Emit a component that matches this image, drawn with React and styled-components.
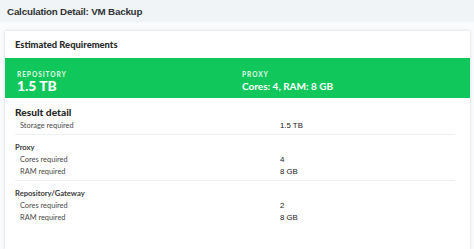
import React from "react";
import styled, { createGlobalStyle } from "styled-components";

const Global = createGlobalStyle`
  html, body { margin: 0; padding: 0; }
  body { background: #fafbfc; width: 474px; height: 249px; overflow: hidden; }
`;

const Page = styled.div`
  display: flex;
  flex-direction: column;
  height: 249px;
`;

const Header = styled.div`
  height: 22px;
  background: #f1f4f6;
  display: flex;
  align-items: center;
  padding-left: 7px;
  font-family: "Liberation Sans", Arial, sans-serif;
  font-weight: bold;
  font-size: 9.8px;
  letter-spacing: -0.2px;
  color: #2f3235;
`;

const Body = styled.div`
  padding: 9px 4px 0 5px;
  flex: 1;
  display: flex;
`;

const Card = styled.div`
  flex: 1;
  background: #fff;
  box-shadow: 0 0 3px rgba(0, 0, 0, 0.15);
  display: flex;
  flex-direction: column;
  font-family: "Lato", "Open Sans", sans-serif;
`;

const CardTitle = styled.div`
  height: 27px;
  display: flex;
  align-items: center;
  padding-left: 10px;
  font-weight: 900;
  font-size: 9.4px;
  color: #2a2a2a;
`;

const Banner = styled.div`
  height: 40px;
  box-sizing: border-box;
  padding: 5px 0 0 12px;
  background: #0fc75a;
  display: grid;
  grid-template-columns: 225px 1fr;
  align-items: center;
  color: #fff;
`;

const Stat = styled.div`
  display: flex;
  flex-direction: column;
`;

const StatLabel = styled.div`
  font-size: 6.6px;
  font-weight: 900;
  letter-spacing: 0.9px;
  color: rgba(255, 255, 255, 0.82);
  line-height: 10px;
`;

const StatValue = styled.div`
  font-size: ${(p) => (p.$big ? "13.8px" : "10px")};
  font-weight: ${(p) => (p.$big ? 900 : 700)};
  line-height: 14px;
`;

const Details = styled.div`
  padding: 7px 15px 0 10px;
`;

const DetailTitle = styled.div`
  font-size: 10.2px;
  font-weight: 900;
  color: #2a2a2a;
  line-height: 15px;
`;

const Section = styled.div`
  border-bottom: ${(p) => (p.$last ? "none" : "1px solid #eef0f2")};
  padding-bottom: 2px;
`;

const SectionTitle = styled.div`
  font-size: 7.6px;
  font-weight: 700;
  color: #3a3a3a;
  line-height: 14px;
  padding-top: 5px;
`;

const Row = styled.div`
  display: grid;
  grid-template-columns: 260px 1fr;
  padding-left: 5px;
  line-height: 12px;
`;

const Label = styled.span`
  font-size: 7.4px;
  color: #4a4a4a;
`;

const Value = styled.span`
  font-family: "Liberation Sans", Arial, sans-serif;
  font-size: 7.8px;
  color: #222;
`;

export default function App() {
  return (
    <Page>
      <Global />
      <Header>Calculation Detail: VM Backup</Header>
      <Body>
        <Card>
          <CardTitle>Estimated Requirements</CardTitle>
          <Banner>
            <Stat>
              <StatLabel>REPOSITORY</StatLabel>
              <StatValue $big>1.5 TB</StatValue>
            </Stat>
            <Stat>
              <StatLabel>PROXY</StatLabel>
              <StatValue>Cores: 4, RAM: 8 GB</StatValue>
            </Stat>
          </Banner>
          <Details>
            <DetailTitle>Result detail</DetailTitle>
            <Section>
              <Row>
                <Label>Storage required</Label>
                <Value>1.5 TB</Value>
              </Row>
            </Section>
            <Section>
              <SectionTitle>Proxy</SectionTitle>
              <Row>
                <Label>Cores required</Label>
                <Value>4</Value>
              </Row>
              <Row>
                <Label>RAM required</Label>
                <Value>8 GB</Value>
              </Row>
            </Section>
            <Section $last>
              <SectionTitle>Repository/Gateway</SectionTitle>
              <Row>
                <Label>Cores required</Label>
                <Value>2</Value>
              </Row>
              <Row>
                <Label>RAM required</Label>
                <Value>8 GB</Value>
              </Row>
            </Section>
          </Details>
        </Card>
      </Body>
    </Page>
  );
}
